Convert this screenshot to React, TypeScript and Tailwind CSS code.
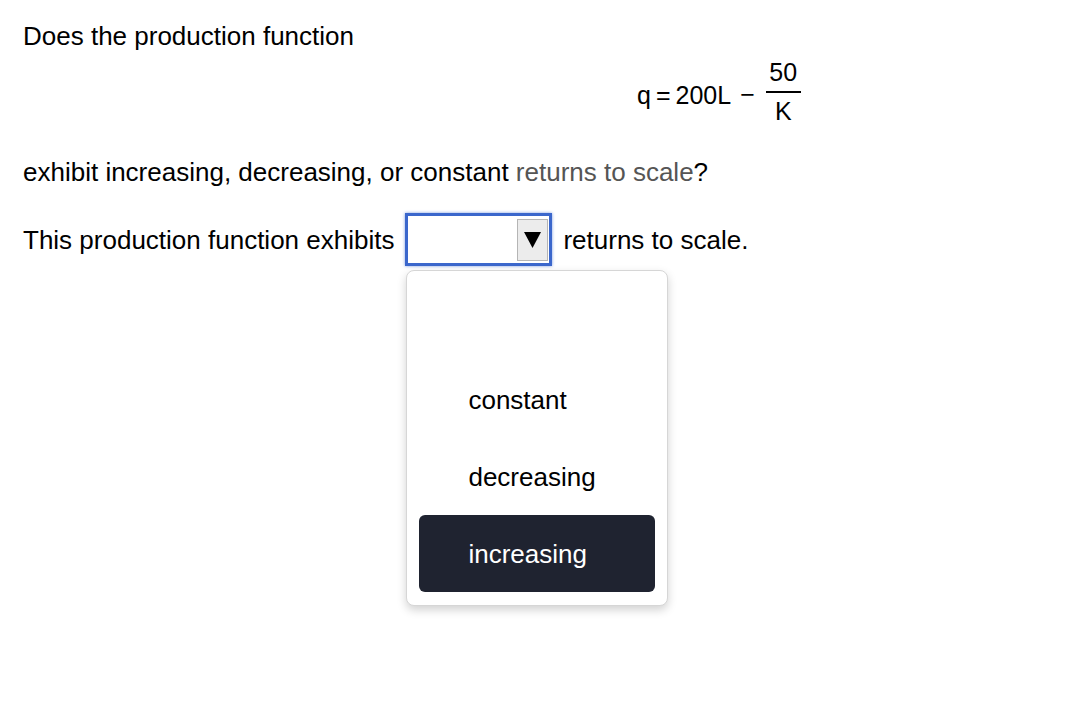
import React from 'react'

const options = ['', 'constant', 'decreasing', 'increasing']

export default function App() {
  const selected = 'increasing'

  return (
    <div className="min-h-screen bg-white text-black font-['Liberation_Sans',Arial,sans-serif] text-[26px] leading-none">
      <div className="pl-[23px] pt-[23px]">
        <p>Does the production function</p>

        {/* equation */}
        <div className="flex items-center ml-[614px] mt-[11px] text-[25px]">
          <span className="mt-[6px]">q</span>
          <span className="mt-[6px] mx-[5px]">=</span>
          <span className="mt-[6px]">200L</span>
          <span className="mt-[4px] ml-[9px] mr-[11px]">&minus;</span>
          <span className="flex flex-col items-center">
            <span className="pb-[6px]">50</span>
            <span className="w-[35px] h-[2px] bg-black" />
            <span className="pt-[6px]">K</span>
          </span>
        </div>

        <p className="mt-[35px]">
          exhibit increasing, decreasing, or constant{' '}
          <span className="text-[#555555]">returns to scale</span>?
        </p>

        <div className="flex items-center mt-[28px]">
          <span>This production function exhibits</span>
          <div className="relative ml-[11px]">
            <div className="w-[147px] h-[53px] border-[3px] border-[#3b67cc] shadow-[0_0_3px_#7c9be0] flex items-center justify-end pr-[1px]">
              <div className="w-[31px] h-[42px] bg-[#ececec] border border-[#b5b5b5] flex items-center justify-center">
                <svg width="17" height="17" viewBox="0 0 17 17">
                  <polygon points="0,1 17,1 8.5,17" fill="#000" />
                </svg>
              </div>
            </div>

            {/* open menu */}
            <div className="absolute left-[1px] top-[57px] w-[262px] bg-white border border-[#d6d6d6] rounded-[8px] shadow-[0_4px_10px_rgba(0,0,0,0.18)] px-[12px] py-[13px]">
              {options.map(opt => (
                <div
                  key={opt || 'blank'}
                  className={`h-[77px] flex items-center pl-[49px] rounded-[6px] ${
                    opt === selected ? 'bg-[#1f2330] text-white' : 'text-black'
                  }`}
                >
                  {opt}
                </div>
              ))}
            </div>
          </div>
          <span className="ml-[11px]">returns to scale.</span>
        </div>
      </div>
    </div>
  )
}
